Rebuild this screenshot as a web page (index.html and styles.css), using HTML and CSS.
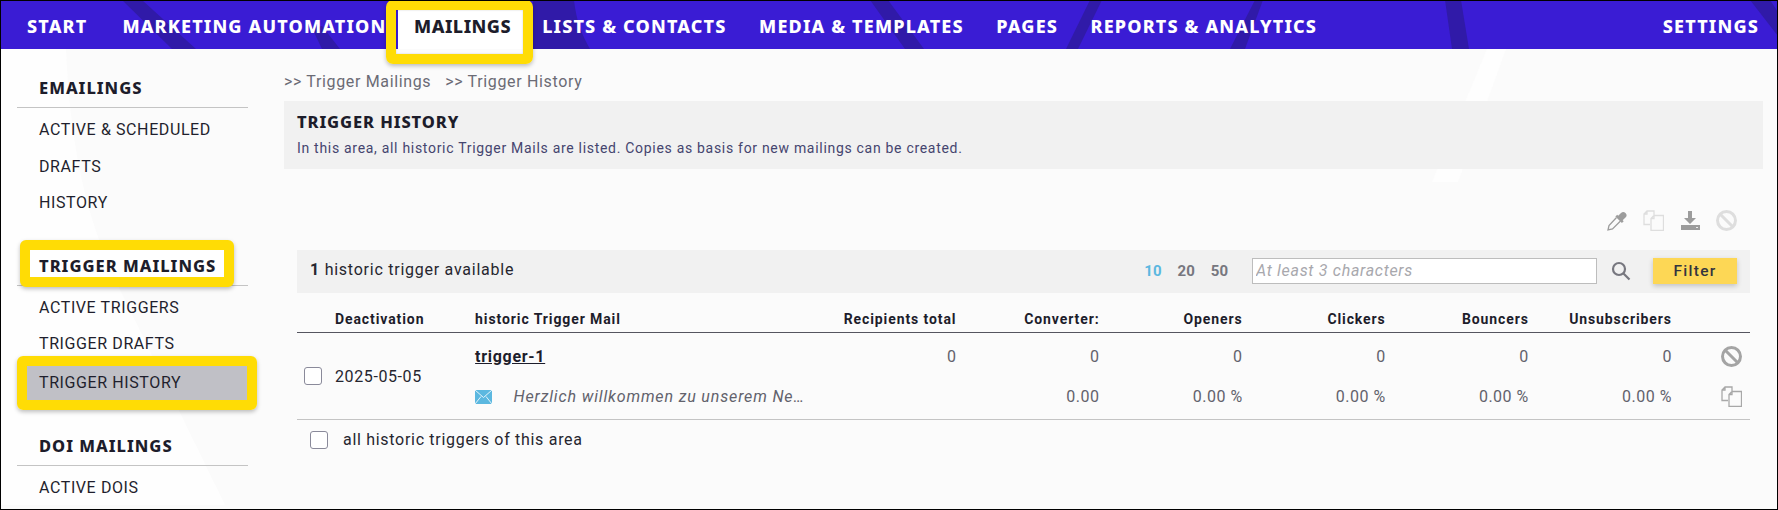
FILE: index.html
```html
<!DOCTYPE html>
<html lang="en">
<head>
<meta charset="utf-8">
<title>Trigger History</title>
<link rel="stylesheet" href="styles.css">
</head>
<body>
<div class="page">
  <svg class="backdrop" width="1778" height="510" viewBox="0 0 1778 510" aria-hidden="true">
    <rect class="band" width="1778" height="49"/>
    <path class="shape" d="M0 49H66C70 140 84 220 125 300L225 505H0Z"/>
    <path class="shape" d="M1487 49H1506L1458 182H1432Z"/>
    <path class="stripe" d="M122 0H142L196 49H172Z"/>
    <path class="stripe" d="M312 28L322 26L340 49H322Z"/>
    <path class="stripe" d="M533 0H574C576 20 582 35 590 49H533Z"/>
    <path class="stripe" d="M870 0H888L924 49H905Z"/>
    <path class="stripe" d="M1090 0H1102L1078 49H1066Z"/>
    <path class="stripe" d="M1255 0H1263L1245 49H1230Z"/>
    <path class="stripe" d="M1445 0H1461L1469 49H1452Z"/>
    <path class="stripe" d="M1750 0H1770L1778 12V36Z"/>
  </svg>
  <nav class="topnav">
    <a class="nav-item nav-start">START</a>
    <a class="nav-item">MARKETING AUTOMATION</a>
    <a class="nav-item nav-current">MAILINGS</a>
    <a class="nav-item">LISTS &amp; CONTACTS</a>
    <a class="nav-item">MEDIA &amp; TEMPLATES</a>
    <a class="nav-item">PAGES</a>
    <a class="nav-item">REPORTS &amp; ANALYTICS</a>
    <a class="nav-item nav-settings">SETTINGS</a>
  </nav>
  <div class="body">
    <aside class="sidebar">
      <h3 class="side-head">EMAILINGS</h3>
      <a class="side-link">ACTIVE &amp; SCHEDULED</a>
      <a class="side-link">DRAFTS</a>
      <a class="side-link">HISTORY</a>
      <h3 class="side-head side-head-marked"><span class="mark">TRIGGER MAILINGS</span></h3>
      <a class="side-link">ACTIVE TRIGGERS</a>
      <a class="side-link">TRIGGER DRAFTS</a>
      <a class="side-link side-current">TRIGGER HISTORY</a>
      <h3 class="side-head side-head-doi">DOI MAILINGS</h3>
      <a class="side-link">ACTIVE DOIS</a>
    </aside>
    <main class="content">
      <div class="crumbs"><span>&gt;&gt; Trigger Mailings</span><span>&gt;&gt; Trigger History</span></div>
      <header class="intro">
        <h1 class="intro-title">TRIGGER HISTORY</h1>
        <p class="intro-text">In this area, all historic Trigger Mails are listed. Copies as basis for new mailings can be created.</p>
      </header>
      <div class="inner">
        <div class="tools">
          <svg class="icon" viewBox="0 0 21 21"><path class="ic-dark" d="M14 3a2.700 2.700 0 0 1 4.500 4.500l-2.800 2.800 1 1-1.800 1.800-6.500-6.500 1.800-1.800 1 1z"/><path class="ic-line" d="M9.500 7.500L2 15.500 1 20l4.500-1 8-8"/></svg>
          <svg class="icon" viewBox="0 0 21 21"><path class="ic-pale" d="M7 14.500H1V4l3-3h7v4.500M4 1v3H1M8 8.500l3-3h9.500v15H8zM11 5.500v3H8"/></svg>
          <svg class="icon" viewBox="0 0 21 21"><path class="ic-dark" d="M8 1h4v7h4l-6 6-6-6h4zM1 15h19v5H1z"/><path class="ic-notch" d="M16 17h2v1h-2z"/></svg>
          <svg class="icon" viewBox="0 0 21 21"><circle class="ic-ban-pale" cx="10.500" cy="10.500" r="9"/><path class="ic-ban-pale" d="M4.500 4.500l12 12"/></svg>
        </div>
        <div class="filterbar">
          <span class="count"><b>1</b> historic trigger available</span>
          <div class="pager"><a class="page-on">10</a><a>20</a><a>50</a></div>
          <input class="search" type="text" placeholder="At least 3 characters">
          <svg class="search-icon" viewBox="0 0 20 20"><circle cx="8" cy="8" r="6"/><path d="M12.500 12.500l6 6"/></svg>
          <button class="filter-btn" type="button">Filter</button>
        </div>
        <table class="grid">
          <colgroup>
            <col class="c-check"><col class="c-date"><col class="c-name">
            <col class="c-rec"><col class="c-num"><col class="c-num"><col class="c-num"><col class="c-num"><col class="c-num"><col class="c-act">
          </colgroup>
          <thead>
            <tr>
              <th></th><th>Deactivation</th><th>historic Trigger Mail</th>
              <th class="r">Recipients total</th><th class="r">Converter:</th><th class="r">Openers</th><th class="r">Clickers</th><th class="r">Bouncers</th><th class="r">Unsubscribers</th><th></th>
            </tr>
          </thead>
          <tbody>
            <tr class="row-a">
              <td rowspan="2" class="cell-check"><span class="box"></span></td>
              <td rowspan="2" class="cell-date">2025-05-05</td>
              <td class="cell-name"><a class="trigger-link">trigger-1</a></td>
              <td class="r">0</td><td class="r">0</td><td class="r">0</td><td class="r">0</td><td class="r">0</td><td class="r">0</td>
              <td class="cell-act"><svg class="icon" viewBox="0 0 21 21"><circle class="ic-ban" cx="10.500" cy="10.500" r="9"/><path class="ic-ban" d="M4.500 4.500l12 12"/></svg></td>
            </tr>
            <tr class="row-b">
              <td class="cell-subject">
                <svg class="envelope" viewBox="0 0 17 14"><rect width="17" height="14" fill="#5cb8e0"/><path d="M0 0l8.500 7.500L17 0M0 14l6-7.500M17 14l-6-7.500" fill="none" stroke="#e4f3fa" stroke-width="1"/></svg>
                <em class="subject">Herzlich willkommen zu unserem Ne…</em>
              </td>
              <td class="r"></td><td class="r">0.00</td><td class="r">0.00 %</td><td class="r">0.00 %</td><td class="r">0.00 %</td><td class="r">0.00 %</td>
              <td class="cell-act"><svg class="icon" viewBox="0 0 21 21"><path class="ic-copy" d="M7 14.500H1V4l3-3h7v4.500M4 1v3H1M8 8.500l3-3h9.500v15H8zM11 5.500v3H8"/></svg></td>
            </tr>
          </tbody>
        </table>
        <label class="all"><span class="box"></span>all historic triggers of this area</label>
      </div>
    </main>
  </div>
</div>
</body>
</html>
```
FILE: styles.css
```css
* { box-sizing: border-box; }
html, body { margin: 0; height: 510px; overflow: hidden; }
body { font-family: Roboto, "Liberation Sans", sans-serif; color: #1d1d2b; background: #fbfbfb; }
.page { position: relative; width: 1778px; height: 510px; overflow: hidden; border: 1px solid #000; background: #fbfbfb; }
.backdrop { position: absolute; left: -1px; top: -1px; }
.band { fill: #3a1cd4; }
.shape { fill: #fefefe; }
.stripe { fill: #301aa8; }

.topnav { position: relative; display: flex; height: 48px; padding-left: 26px; }
.nav-item { font-family: "Noto Sans", sans-serif; font-weight: 800; font-size: 18px; letter-spacing: 1.150px; color: #fff; line-height: 50px; white-space: nowrap; margin-right: 32.500px; height: 48px; }
.nav-start { margin-right: 35px; }
.nav-current { position: relative; color: #1d1d2b; background: #fff; margin: 0 18px 0 -21px; padding: 0 13px 0 16px; letter-spacing: 0.500px; }
.nav-current::after { content: ""; position: absolute; left: -12px; right: -9px; top: -1px; bottom: -15px; border: 10px solid #ffdc05; border-radius: 7px; box-shadow: 0 2px 4px rgba(0,0,0,.25), inset 0 0 2px rgba(0,0,0,.2); }
.nav-settings { margin-left: auto; margin-right: 18px; }

.body { position: relative; display: flex; }
.sidebar { width: 231px; margin-left: 16px; display: flex; flex-direction: column; padding-top: 26px; }
.side-head { margin: 0 0 4px; font-family: "Noto Sans", sans-serif; font-weight: 800; font-size: 16.500px; letter-spacing: 1px; line-height: 26px; padding: 0 0 6px 22px; border-bottom: 1px solid #c4c4c4; }
.side-head-marked { margin-top: 31px; }
.side-head-doi { margin-top: 30px; }
.side-link { font-size: 16px; letter-spacing: 0.6px; line-height: 36.500px; padding-left: 22px; color: #1f1f2d; }
.mark { position: relative; z-index: 1; display: inline-block; }
.mark::after { content: ""; position: absolute; z-index: -1; left: -19px; right: -18px; top: -13px; bottom: -8px; background: #fff; border: 10px solid #ffdc05; border-radius: 6px; box-shadow: 0 2px 4px rgba(0,0,0,.25); }
.side-current { position: relative; background: #c0c0c6; line-height: 34px; margin: 3px 0 3px 10px; padding-left: 12px; }
.side-current::after { content: ""; position: absolute; left: -10px; right: -9px; top: -10px; bottom: -10px; border: 10px solid #ffdc05; border-radius: 6px; box-shadow: 0 2px 4px rgba(0,0,0,.25); }

.content { width: 1479px; margin-left: 36px; padding-top: 21px; }
.crumbs { display: flex; gap: 14px; font-size: 16px; letter-spacing: 0.65px; line-height: 24px; color: #6b6b75; height: 31px; }
.intro { height: 68px; background: #f1f1f1; padding: 10px 13px 0; }
.intro-title { margin: 0; font-family: "Noto Sans", sans-serif; font-weight: 800; font-size: 16.500px; letter-spacing: 0.900px; line-height: 22px; }
.intro-text { margin: 6px 0 0; font-size: 14px; letter-spacing: 0.7px; line-height: 18px; color: #45456f; }
.inner { margin: 0 13px; }
.tools { display: flex; justify-content: flex-end; gap: 15.500px; padding: 41px 13px 0 0; height: 81px; }
.icon { width: 21px; height: 21px; display: block; }
.ic-dark { fill: #9c9c9c; }
.ic-line { fill: none; stroke: #9c9c9c; stroke-width: 1.300; }
.ic-notch { fill: #eee; }
.ic-pale { fill: none; stroke: #dedede; stroke-width: 1.300; }
.ic-ban-pale { fill: none; stroke: #dedede; stroke-width: 3; }
.ic-ban { fill: none; stroke: #a4a4a4; stroke-width: 3; }
.ic-copy { fill: none; stroke: #a8a8a8; stroke-width: 1.300; }

.filterbar { display: flex; align-items: center; height: 43px; background: #f1f1f1; padding: 0 13px; }
.count { font-size: 16px; letter-spacing: 0.75px; color: #26262f; padding-bottom: 4px; }
.count b { font-weight: 700; }
.pager { margin-left: auto; display: flex; gap: 16px; font-weight: 700; font-size: 15px; color: #77777f; padding-bottom: 2px; }
.page-on { color: #5cb8e0; }
.search { width: 345px; height: 26px; margin: 0 0 2px 24px; border: 1px solid #bdbdbd; background: #fff; padding: 0 3px; font-family: Roboto, sans-serif; font-size: 16px; letter-spacing: 0.7px; font-style: italic; outline: 0; }
.search::placeholder { color: #a8a8ad; opacity: 1; }
.search-icon { width: 20px; height: 20px; margin: 0 0 2px 14px; fill: none; stroke: #77777f; stroke-width: 2.200; }
.filter-btn { width: 84px; height: 26px; margin: 0 0 2px 22px; border: 0; background: #fdd755; font-family: Roboto, sans-serif; font-weight: 500; font-size: 15.500px; letter-spacing: 1.300px; color: #34343e; box-shadow: 0 2px 5px rgba(0,0,0,.2); padding: 0; }

.grid { border-collapse: collapse; table-layout: fixed; width: 1453px; }
.c-check { width: 38px; }
.c-date { width: 140px; }
.c-name { width: 340px; }
.c-rec { width: 141px; }
.c-num { width: 143px; }
.c-act { width: 78px; }
.grid th { font-weight: 700; font-size: 14px; letter-spacing: 0.9px; text-align: left; height: 39px; padding: 14px 0 0; border-bottom: 1px solid #55555f; color: #1d1d2b; white-space: nowrap; }
.grid th.r, .grid td.r { text-align: right; }
.grid td { padding: 0; font-size: 16px; letter-spacing: 0.5px; color: #62626c; vertical-align: middle; white-space: nowrap; }
.row-a td { height: 47px; padding-top: 2px; }
.row-b td { height: 40px; padding-bottom: 4px; border-bottom: 1px solid #c4c4c4; }
.grid .cell-check { padding: 0 0 0 7px; border-bottom: 1px solid #c4c4c4; }
.grid .cell-date { color: #26262f; border-bottom: 1px solid #c4c4c4; letter-spacing: 0.6px; }
.box { display: block; width: 18px; height: 18px; border: 1px solid #8a8a9a; border-radius: 3px; background: #fff; }
.trigger-link { font-weight: 700; font-size: 16px; letter-spacing: 0.7px; text-decoration: underline; color: #1d1d2b; }
.envelope { width: 17px; height: 14px; vertical-align: -2px; }
.subject { margin-left: 17px; color: #62626c; font-size: 16px; letter-spacing: 0.85px; }
.grid .cell-act { padding-left: 49px; }
.all { display: flex; align-items: center; gap: 15px; height: 40px; padding-left: 13px; font-size: 16px; letter-spacing: 0.7px; color: #26262f; }
```
